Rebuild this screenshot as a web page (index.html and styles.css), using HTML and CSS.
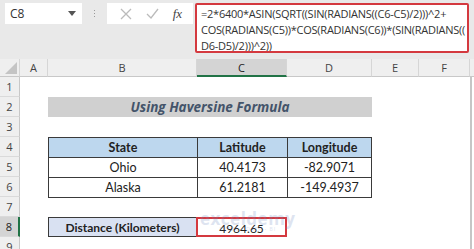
FILE: index.html
```html
<!DOCTYPE html>
<html lang="en">
<head>
  <meta charset="UTF-8">
  <title>Using Haversine Formula</title>
  <link rel="stylesheet" href="styles.css">
</head>
<body>

  <div class="toolbar">
    <div class="namebox">
      <span>C8</span>
      <svg class="drop" width="8" height="5" viewBox="0 0 8 5"><path d="M0 0h8L4 5z" fill="#555"/></svg>
    </div>
    <div class="grip">
      <i></i><i></i><i></i>
    </div>
    <div class="fxbox">
      <svg width="12" height="12" viewBox="0 0 12 12"><path d="M1 1l10 10M11 1L1 11" stroke="#bbb" stroke-width="1.3" fill="none"/></svg>
      <svg width="13" height="11" viewBox="0 0 13 11"><path d="M1 6l4 4 7-9" stroke="#bbb" stroke-width="1.3" fill="none"/></svg>
      <span class="fx">fx</span>
    </div>
    <div class="formula">=2*6400*ASIN(SQRT((SIN(RADIANS((C6-C5)/2)))^2+<br>COS(RADIANS(C5))*COS(RADIANS(C6))*(SIN(RADIANS((<br>D6-D5)/2)))^2))</div>
  </div>

  <div class="sheet">
    <div class="corner"><svg width="12" height="12" viewBox="0 0 12 12"><path d="M12 0v12H0z" fill="#c4c4c4"/></svg></div>
    <div class="colhead">A</div>
    <div class="colhead">B</div>
    <div class="colhead active">C</div>
    <div class="colhead">D</div>
    <div class="colhead">E</div>
    <div class="colhead">F</div>
    <div class="colhead edge"></div>

    <div class="rowhead r1">1</div>
    <div class="rowhead r2">2</div>
    <div class="rowhead r3">3</div>
    <div class="rowhead r4">4</div>
    <div class="rowhead r5">5</div>
    <div class="rowhead r6">6</div>
    <div class="rowhead r7">7</div>
    <div class="rowhead r8 active">8</div>
    <div class="rowhead r9">9</div>

    <div class="scroll"></div>

    <div class="title">Using Haversine Formula</div>

    <table class="data">
      <tr>
        <th>State</th>
        <th>Latitude</th>
        <th>Longitude</th>
      </tr>
      <tr>
        <td>Ohio</td>
        <td>40.4173</td>
        <td>-82.9071</td>
      </tr>
      <tr>
        <td>Alaska</td>
        <td>61.2181</td>
        <td>-149.4937</td>
      </tr>
    </table>

    <div class="distlabel">Distance (Kilometers)</div>
    <div class="distvalue">4964.65</div>

    <div class="watermark">
      <span class="brand">exceldemy</span>
      <span class="tag">EXCEL · DATA · BI</span>
    </div>
  </div>

</body>
</html>
```

FILE: styles.css
```css
body {
  margin: 0;
  width: 474px;
  height: 249px;
  overflow: hidden;
  background: #fff;
  font-family: "Open Sans", "Liberation Sans", sans-serif;
}

.toolbar {
  display: flex;
  align-items: flex-start;
  height: 59px;
  padding: 3px 0 0 5px;
  box-sizing: border-box;
  background: #e9e9e9;
}

.namebox {
  display: flex;
  align-items: center;
  justify-content: space-between;
  width: 77px;
  height: 21px;
  padding: 0 6px 0 5px;
  box-sizing: border-box;
  background: #fff;
  font-size: 12px;
  color: #333;
}

.grip {
  display: flex;
  flex-direction: column;
  gap: 2px;
  width: 25px;
  align-items: center;
  padding-top: 7px;
}

.grip i {
  width: 1px;
  height: 1px;
  background: #999;
}

.fxbox {
  display: flex;
  align-items: center;
  justify-content: space-around;
  width: 86px;
  height: 21px;
  margin-right: 2px;
  padding: 0 4px 0 6px;
  box-sizing: border-box;
  background: #fff;
}

.fx {
  font-family: "Liberation Serif", serif;
  font-style: italic;
  font-size: 13px;
  color: #444;
}

.formula {
  width: 274px;
  height: 50px;
  padding: 1px 0 0 4px;
  box-sizing: border-box;
  border: 2px solid #d4393f;
  border-radius: 2px;
  background: #fff;
  font-size: 11px;
  letter-spacing: -0.25px;
  line-height: 16px;
  color: #333;
  white-space: nowrap;
  overflow: hidden;
}

.sheet {
  position: relative;
  display: grid;
  grid-template-columns: 20px 28px 149px 90px 85px 47px 51px 4px;
  grid-template-rows: 18px repeat(9, 20px);
  font-family: Lato, "Liberation Sans", sans-serif;
  font-size: 12.5px;
  color: #222;
}

.corner {
  display: flex;
  align-items: flex-end;
  justify-content: flex-end;
  padding: 0 2px 2px 0;
  background: #efefef;
  border-right: 1px solid #d6d6d6;
  border-bottom: 1px solid #c8c8c8;
}

.colhead {
  display: flex;
  align-items: center;
  justify-content: center;
  background: #efefef;
  border-right: 1px solid #d6d6d6;
  border-bottom: 1px solid #c8c8c8;
  font-family: "Open Sans", sans-serif;
  font-size: 11px;
  color: #444;
}

.colhead.active {
  background: #d4d4d4;
  border-bottom: 2px solid #217346;
  color: #222;
}

.colhead.edge {
  border-right: none;
}

.rowhead {
  grid-column: 1;
  display: flex;
  align-items: center;
  justify-content: center;
  background: #efefef;
  border-right: 1px solid #c8c8c8;
  border-bottom: 1px solid #dadada;
  font-family: "Open Sans", sans-serif;
  font-size: 11px;
  color: #444;
}

.r1 { grid-row: 2; }
.r2 { grid-row: 3; }
.r3 { grid-row: 4; }
.r4 { grid-row: 5; }
.r5 { grid-row: 6; }
.r6 { grid-row: 7; }
.r7 { grid-row: 8; }
.r8 { grid-row: 9; }
.r9 { grid-row: 10; }

.rowhead.active {
  background: #d4d4d4;
  border-right: 2px solid #217346;
  color: #222;
}

.scroll {
  grid-column: 8;
  grid-row: 2 / 11;
  border-left: 2px solid #c6c6c6;
}

.title {
  grid-column: 3 / 6;
  grid-row: 3;
  display: flex;
  align-items: center;
  justify-content: center;
  background: #d0d0d0;
  font-family: "Open Sans", sans-serif;
  font-weight: bold;
  font-style: italic;
  font-size: 13.5px;
  color: #44546a;
}

.data {
  grid-column: 3 / 6;
  grid-row: 5 / 8;
  width: 100%;
  height: 100%;
  border-collapse: collapse;
  border: 1px solid #3a3a3a;
}

.data th,
.data td {
  height: 19px;
  padding: 0;
  border: 1px solid #3a3a3a;
  text-align: center;
  font-size: 12.5px;
}

.data th {
  background: #bdd7ee;
  font-weight: bold;
}

.data th:first-child,
.data td:first-child {
  width: 148px;
}

.data th:nth-child(2),
.data td:nth-child(2) {
  width: 89px;
}

.distlabel {
  grid-column: 3;
  grid-row: 9;
  display: flex;
  align-items: center;
  justify-content: center;
  background: #d9e1f2;
  border: 1px solid #3a3a3a;
  font-size: 12px;
  font-weight: bold;
}

.distvalue {
  grid-column: 4;
  grid-row: 9;
  display: flex;
  align-items: center;
  justify-content: center;
  border: 2px solid #d4393f;
  margin-left: -1px;
  padding-top: 2px;
  font-size: 12px;
}

.watermark {
  position: absolute;
  left: 200px;
  top: 152px;
  display: flex;
  flex-direction: column;
  align-items: center;
  pointer-events: none;
  opacity: 0.22;
}

.brand {
  font-family: "Open Sans", sans-serif;
  font-size: 17px;
  line-height: 15px;
  font-weight: bold;
  color: #6f86c0;
  letter-spacing: 0.5px;
}

.tag {
  font-size: 5px;
  line-height: 6px;
  color: #6f86c0;
  letter-spacing: 1px;
}
```
